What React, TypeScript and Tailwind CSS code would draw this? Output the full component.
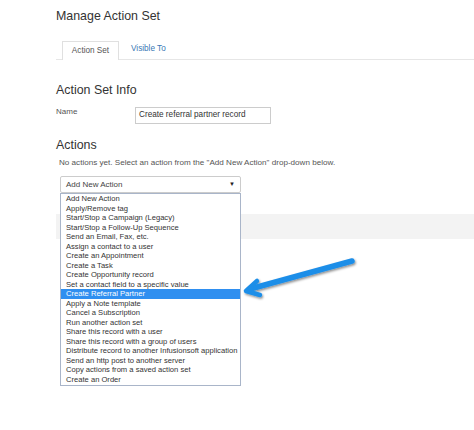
import React from "react";

const actions = [
  "Add New Action",
  "Apply/Remove tag",
  "Start/Stop a Campaign (Legacy)",
  "Start/Stop a Follow-Up Sequence",
  "Send an Email, Fax, etc.",
  "Assign a contact to a user",
  "Create an Appointment",
  "Create a Task",
  "Create Opportunity record",
  "Set a contact field to a specific value",
  "Create Referral Partner",
  "Apply a Note template",
  "Cancel a Subscription",
  "Run another action set",
  "Share this record with a user",
  "Share this record with a group of users",
  "Distribute record to another Infusionsoft application",
  "Send an http post to another server",
  "Copy actions from a saved action set",
  "Create an Order",
];

function Arrow() {
  return (
    <svg
      className="absolute left-[236px] top-[250px]"
      width="130"
      height="55"
      viewBox="0 0 130 55"
    >
      <defs>
        <filter id="sh" x="-20%" y="-50%" width="140%" height="200%">
          <feDropShadow dx="1" dy="1.5" stdDeviation="1.2" floodColor="#000" floodOpacity="0.45" />
        </filter>
      </defs>
      <g filter="url(#sh)" stroke="#1e8ee8" strokeLinecap="round" strokeLinejoin="round" fill="none">
        <path d="M116 11 L14 39" strokeWidth="5.5" />
        <path d="M21 31 L10 41 L24 45" strokeWidth="4.5" />
      </g>
    </svg>
  );
}

export default function App() {
  return (
    <div className="relative w-[474px] h-[430px] bg-white overflow-hidden font-['Liberation_Sans',Arial,sans-serif] text-[#333]">
      <div className="pl-[56px] pt-[8px]">
        {/* Header */}
        <h1 className="text-[12.4px] leading-[16px] h-[16px] text-[#333]">Manage Action Set</h1>

        {/* Tabs */}
        <div className="mt-[18px] flex items-end border-b border-[#e6e6e6] h-[18px] pl-[6px]">
          <div className="h-[19px] -mb-px w-[57px] border border-b-0 border-[#e0e0e0] bg-white flex items-center justify-center text-[8.2px] text-[#555]">
            Action Set
          </div>
          <div className="h-[19px] ml-[12px] flex items-center text-[8.2px] text-[#3a78b5]">Visible To</div>
        </div>

        {/* Action Set Info */}
        <h2 className="mt-[23px] text-[12.4px] leading-[14px]">Action Set Info</h2>
        <div className="mt-[10px] flex items-center h-[17px]">
          <span className="w-[79px] text-[8px] text-[#555] -mt-[7px]">Name</span>
          <div className="w-[136px] h-[17px] border border-[#ccc] flex items-center px-[3px] text-[8.2px] text-[#333]">
            Create referral partner record
          </div>
        </div>

        {/* Actions */}
        <h2 className="mt-[14px] text-[12.4px] leading-[14px]">Actions</h2>
        <p className="mt-[6px] ml-[3px] text-[8.1px] leading-[10px] text-[#555]">
          No actions yet. Select an action from the "Add New Action" drop-down below.
        </p>
        <div className="relative mt-[8px] ml-[4px] w-[181px]">
          <div className="h-[17px] border border-[#ccc] rounded-[2px] flex items-center justify-between px-[5px] text-[8px] text-[#444]">
            <span>Add New Action</span>
            <span className="text-[6px] text-[#222]">▼</span>
          </div>
          {/* Open dropdown menu */}
          <ul className="absolute left-0 top-[17px] w-[181px] bg-white border border-[#a9b5c9] z-10 pb-[1px]">
            {actions.map((a) => (
              <li
                key={a}
                className={
                  a === "Create Referral Partner"
                    ? "h-[9.5px] leading-[9.5px] pl-[5px] text-[7.6px] whitespace-nowrap bg-[#2f8ff0] text-white"
                    : "h-[9.5px] leading-[9.5px] pl-[5px] text-[7.6px] whitespace-nowrap text-[#333]"
                }
              >
                {a}
              </li>
            ))}
          </ul>
        </div>

        {/* Gray table header band */}
        <div className="mt-[21px] h-[25px] bg-[#f3f3f3]" />
      </div>

      <Arrow />
    </div>
  );
}
